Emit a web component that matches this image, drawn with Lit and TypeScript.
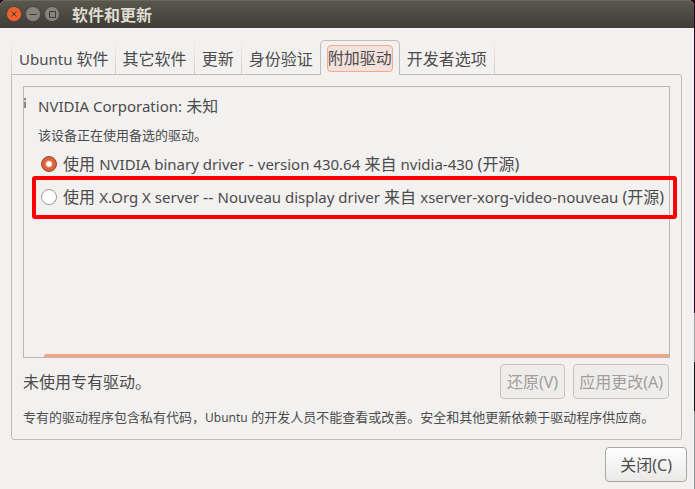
import { LitElement, html, css, svg } from "lit";
import { customElement, state } from "lit/decorators.js";

const TABS: [string, string][] = [
  ["Ubuntu", "软件"],
  ["", "其它软件"],
  ["", "更新"],
  ["", "身份验证"],
  ["", "附加驱动"],
  ["", "开发者选项"],
];

@customElement("app-root")
export class AppRoot extends LitElement {
  static styles = css`
    :host {
      display: block;
      box-sizing: border-box;
      min-height: 100vh;
      background: linear-gradient(#2c001e 64%, #a5a5a5 64% 74%, #111 74% 84%, #8f9296 84%);
      padding-right: 1px;
      color: #4c4c4c;
      font: 16px/24px "Noto Sans", "Noto Sans CJK SC", sans-serif;
    }
    * {
      box-sizing: border-box;
    }
    button {
      font: inherit;
      color: inherit;
      margin: 0;
    }
    .latin {
      font-size: 15px;
    }
    .window {
      display: flex;
      flex-direction: column;
      min-height: 100vh;
      background: #f2f1f0;
      border-radius: 6px 6px 0 0;
    }
    .titlebar {
      display: flex;
      align-items: center;
      height: 28px;
      padding: 0 6px;
      gap: 3px;
      border-radius: 6px 6px 0 0;
      background: linear-gradient(#5b584c, #3e3d38);
      box-shadow: inset 0 1px #6a675b;
    }
    .control {
      width: 16px;
      height: 16px;
      padding: 0;
      border: 0;
      background: none;
      display: block;
    }
    .control svg {
      display: block;
    }
    .title {
      margin: 0 0 0 9px;
      padding-top: 1px;
      font-size: 16px;
      line-height: 24px;
      font-weight: 700;
      color: #dfdbd2;
    }
    .content {
      display: flex;
      flex-direction: column;
      flex: 1;
      padding: 12px 12px 7px 11px;
    }
    .tabs {
      display: flex;
      align-items: flex-end;
    }
    .tab {
      height: 34px;
      padding: 3px 7px 0;
      border: 0;
      border-right: 1px solid;
      border-image: linear-gradient(#f2f1f0, #cfcdca) 1;
      background: none;
      white-space: nowrap;
    }
    .tab:first-child {
      border-left: 1px solid;
      padding-right: 6px;
    }
    .tab.before {
      border-right: 0;
    }
    .tab.selected {
      height: 35px;
      margin-bottom: -1px;
      padding: 0 6px;
      border: 1px solid #bfbdba;
      border-bottom: 0;
      border-image: none;
      border-radius: 5px 5px 0 0;
      background: #f2f1f0;
      position: relative;
    }
    .focus {
      display: block;
      height: 27px;
      line-height: 25px;
      border: 1px solid #f3a98d;
      border-radius: 4px;
      background: #f3e2dc;
    }
    .panel {
      display: flex;
      flex-direction: column;
      flex: 1;
      padding: 11px 11px 10px;
      border: 1px solid #bfbdba;
      border-radius: 0 3px 3px 3px;
    }
    .drivers {
      flex: 1;
      position: relative;
      margin: 0;
      padding: 7px 0 0 14px;
      border: 1px solid #b9b7b4;
      min-width: 0;
    }
    .device {
      margin: 0;
      font-size: 16px;
      line-height: 24px;
      font-weight: 400;
    }
    .small {
      margin: 0;
      font-size: 13px;
      line-height: 20px;
    }
    .small .latin {
      font-size: 12px;
    }
    .note {
      padding: 7px 0 2px;
    }
    .option {
      display: flex;
      align-items: center;
      height: 33px;
      gap: 6px;
      padding-left: 3px;
      white-space: nowrap;
      position: relative;
    }
    .option.marked::after {
      content: "";
      position: absolute;
      inset: -4px -8px -6px -6px;
      border: 4px solid #fe0000;
      border-radius: 3px;
      pointer-events: none;
    }
    .option input {
      appearance: none;
      flex: none;
      width: 16px;
      height: 16px;
      margin: 0;
      border: 1px solid #9c9a97;
      border-radius: 50%;
      background: #fff;
    }
    .option input:checked {
      border-color: #9a4a2c;
      background: radial-gradient(circle, #fff 2px, #d9643a 4px);
    }
    .scroll {
      position: absolute;
      left: 20px;
      right: 0;
      bottom: 0;
      height: 3px;
      background: #f3a384;
      border-radius: 2px 0 0 0;
    }
    .clip {
      position: absolute;
      left: 0;
      top: 11px;
      width: 2px;
      height: 10px;
      background: linear-gradient(#8a8986 2px, #d0cfcc 2px 4px, #8a8986 4px);
    }
    .actions {
      display: flex;
      align-items: center;
      gap: 8px;
      padding: 7px 1px 8px 0;
    }
    .status {
      flex: 1;
    }
    .button {
      height: 35px;
      padding: 0 6px;
      border: 1px solid #a9a7a4;
      border-radius: 4px;
      background: linear-gradient(#fefefe, #eae9e8);
      line-height: 32px;
      white-space: nowrap;
    }
    .button:disabled {
      padding: 0 5px;
      color: #a09e9b;
      border-color: #c6c4c1;
      background: #eeedec;
    }
    .button:disabled:first-of-type {
      padding: 0 6px;
    }
    .actions,
    .actions + .small {
      margin-top: -1px;
    }
    .actions + .small {
      margin: 0 0 1px;
    }
    .footer {
      display: flex;
      justify-content: flex-end;
      padding-top: 7px;
      margin-right: -5px;
    }
    .footer .button {
      padding: 0 14px;
    }
  `;

  @state() private tab = 4;

  private control(label: string, kind: "close" | "min" | "max") {
    const glyph = {
      close: svg`<path d="M5.5 5.5l5 5m0-5l-5 5" />`,
      min: svg`<path d="M4.5 8.5h7" />`,
      max: svg`<path d="M5.5 5.5h6v6h-6z" />`,
    }[kind];
    return html`<button class="control" aria-label=${label}>
      <svg width="16" height="16" viewBox="0 0 16 16">
        <circle cx="8" cy="8" r="7.5" fill=${kind === "close" ? "#f0612f" : "#85837a"} stroke="#3f3d38" stroke-width=".7" />
        <g fill="none" stroke="#3b3a35">${glyph}</g>
      </svg>
    </button>`;
  }

  render() {
    return html`
      <div class="window">
        <header class="titlebar">
          ${this.control("关闭", "close")} ${this.control("最小化", "min")} ${this.control("最大化", "max")}
          <h1 class="title">软件和更新</h1>
        </header>
        <main class="content">
          <div class="tabs" role="tablist">
            ${TABS.map(([latin, text], i) => {
              const on = i === this.tab;
              const cls = on ? "tab selected" : i === this.tab - 1 ? "tab before" : "tab";
              return html`<button class=${cls} role="tab" aria-selected=${on} @click=${() => (this.tab = i)}>${on
                ? html`<span class="focus">${text}</span>`
                : latin
                  ? html`<span class="latin">${latin}</span> ${text}`
                  : text}</button>`;
            })}
          </div>
          <section class="panel" role="tabpanel">
            <div class="drivers">
              <span class="clip"></span>
              <h2 class="device"><span class="latin">NVIDIA Corporation:</span> 未知</h2>
              <p class="small note">该设备正在使用备选的驱动。</p>
              <label class="option">
                <input type="radio" name="driver" checked />
                <span>使用 <span class="latin">NVIDIA binary driver</span> - <span class="latin">version 430.64</span> 来自 <span class="latin">nvidia-430</span> (开源)</span>
              </label>
              <label class="option marked">
                <input type="radio" name="driver" />
                <span>使用 <span class="latin">X.Org X server</span> -- <span class="latin">Nouveau display driver</span> 来自 <span class="latin">xserver-xorg-video-nouveau</span> (开源)</span>
              </label>
              <div class="scroll"></div>
            </div>
            <div class="actions">
              <span class="status">未使用专有驱动。</span>
              <button class="button" disabled>还原(V)</button>
              <button class="button" disabled>应用更改(A)</button>
            </div>
            <p class="small">专有的驱动程序包含私有代码，<span class="latin">Ubuntu</span> 的开发人员不能查看或改善。安全和其他更新依赖于驱动程序供应商。</p>
          </section>
          <footer class="footer">
            <button class="button">关闭(C)</button>
          </footer>
        </main>
      </div>
    `;
  }
}
